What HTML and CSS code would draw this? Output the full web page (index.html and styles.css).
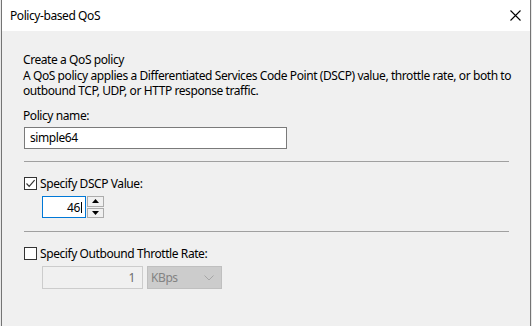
FILE: index.html
```html
<!DOCTYPE html>
<html>
<head>
<meta charset="utf-8">
<link rel="stylesheet" href="styles.css">
</head>
<body>
<div class="window">
  <div class="titlebar">
    <span class="title">Policy-based QoS</span>
    <svg class="close" width="11" height="11" viewBox="0 0 11 11"><path d="M0.5 0.5 L10.5 10.5 M10.5 0.5 L0.5 10.5" stroke="#000" stroke-width="1.1" fill="none"/></svg>
  </div>
  <div class="content">
    <div class="text heading">Create a QoS policy</div>
    <div class="text desc">A QoS policy applies a Differentiated Services Code Point (DSCP) value, throttle rate, or both to<br>outbound TCP, UDP, or HTTP response traffic.</div>
    <div class="text label">Policy name:</div>
    <div class="textbox">simple64</div>
    <div class="sep"></div>
    <div class="check-row">
      <span class="checkbox"><svg width="11" height="11" viewBox="0 0 11 11"><path d="M1.5 5.5 L4.2 8.3 L9.6 2.2" stroke="#333" stroke-width="1.2" fill="none"/></svg></span>
      <span class="text">Specify DSCP Value:</span>
    </div>
    <div class="field-row dscp">
      <div class="numbox focused"><span class="num">46</span><span class="caret"></span></div>
      <div class="spinner">
        <div class="spin-btn"><svg width="7" height="4" viewBox="0 0 7 4"><path d="M3.5 0 L7 4 L0 4 Z" fill="#000"/></svg></div>
        <div class="spin-btn"><svg width="7" height="4" viewBox="0 0 7 4"><path d="M0 0 L7 0 L3.5 4 Z" fill="#000"/></svg></div>
      </div>
    </div>
    <div class="sep sep2"></div>
    <div class="check-row">
      <span class="checkbox"></span>
      <span class="text">Specify Outbound Throttle Rate:</span>
    </div>
    <div class="field-row throttle">
      <div class="numbox disabled"><span class="num">1</span></div>
      <div class="select disabled">
        <span>KBps</span>
        <svg width="10" height="6" viewBox="0 0 10 6"><path d="M0.5 0.5 L5 5 L9.5 0.5" stroke="#a6a6a6" stroke-width="1" fill="none"/></svg>
      </div>
    </div>
  </div>
</div>
</body>
</html>
```
FILE: styles.css
```css
html, body {
  margin: 0;
  padding: 0;
  background: #e9e9e9;
}
body {
  width: 532px;
  height: 326px;
  overflow: hidden;
  font-family: "Noto Sans", "Open Sans", sans-serif;
  font-size: 12px;
  letter-spacing: -0.42px;
  color: #000;
}
.window {
  margin-left: 1px;
  width: 530px;
  height: 326px;
  box-sizing: border-box;
  border-left: 1px solid #747474;
  border-right: 1px solid #747474;
  background: #f0f0f0;
  display: flex;
  flex-direction: column;
}
.titlebar {
  height: 31px;
  background: #fff;
  display: flex;
  align-items: center;
  justify-content: space-between;
  padding: 0 9px 0 8px;
  box-sizing: border-box;
}
.title {
  font-size: 12px;
  line-height: 15px;
  margin-top: -1px;
}
.close {
  display: block;
  margin-top: -1px;
}
.content {
  padding: 21px 0 0 21px;
  display: flex;
  flex-direction: column;
  align-items: flex-start;
}
.text {
  line-height: 15px;
  white-space: nowrap;
}
.desc {
  margin-top: 1px;
}
.label {
  margin-top: 10px;
}
.textbox {
  margin: 4px 0 0 1px;
  width: 263px;
  height: 22px;
  box-sizing: border-box;
  border: 1px solid #7a7a7a;
  background: #fff;
  padding: 0 5px;
  line-height: 20px;
}
.sep {
  margin: 12px 0 0 1px;
  width: 485px;
  height: 1px;
  background: #a0a0a0;
}
.sep2 {
  margin-top: 13px;
}
.check-row {
  display: flex;
  align-items: center;
  margin: 14px 0 0 1px;
  gap: 3px;
}
.checkbox {
  width: 13px;
  height: 13px;
  box-sizing: border-box;
  border: 1px solid #333;
  background: #fff;
  display: flex;
  align-items: center;
  justify-content: center;
}
.checkbox svg {
  display: block;
}
.field-row {
  display: flex;
  margin-left: 19px;
  margin-top: 5px;
}
.dscp {
  gap: 1px;
}
.throttle {
  gap: 4px;
}
.numbox {
  box-sizing: border-box;
  display: flex;
  align-items: center;
  justify-content: flex-end;
  background: #fff;
}
.numbox.focused {
  width: 44px;
  height: 22px;
  border: 1px solid #0078d7;
  padding-right: 3px;
}
.caret {
  width: 1px;
  height: 11px;
  background: #000;
  margin-left: 1px;
}
.numbox.disabled {
  width: 101px;
  height: 23px;
  border: 1px solid #cccccc;
  background: #f0f0f0;
  color: #6d6d6d;
  padding-right: 7px;
}
.spinner {
  width: 17px;
  height: 22px;
  display: flex;
  flex-direction: column;
  gap: 1px;
}
.spin-btn {
  flex: 1;
  box-sizing: border-box;
  border: 1px solid #acacac;
  background: #f0f0f0;
  display: flex;
  align-items: center;
  justify-content: center;
}
.spin-btn svg {
  display: block;
}
.select {
  width: 75px;
  height: 23px;
  box-sizing: border-box;
  border: 1px solid #bfbfbf;
  background: #cccccc;
  color: #838383;
  display: flex;
  align-items: center;
  justify-content: space-between;
  padding: 0 7px 0 3px;
}
.select svg {
  display: block;
}
```
